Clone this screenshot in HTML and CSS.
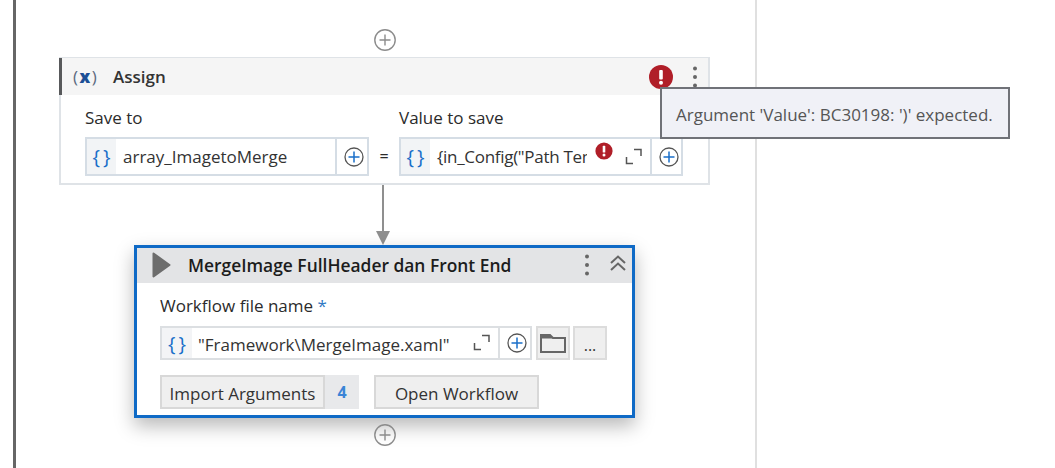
FILE: index.html
```html
<!DOCTYPE html>
<html lang="en">
<head>
<meta charset="utf-8">
<title>Workflow designer</title>
<link rel="stylesheet" href="styles.css">
</head>
<body>
<div class="page">
  <main class="canvas">
    <button class="add add-top" aria-label="Add activity"><svg width="24" height="24" viewBox="0 0 24 24"><circle cx="12" cy="12" r="10.200" fill="none" stroke="#8c8c8c" stroke-width="1.400"/><path d="M12 6.500v11M6.500 12h11" stroke="#8c8c8c" stroke-width="1.400"/></svg></button>

    <section class="assign">
      <header class="assign-head">
        <span class="var-icon">(<b>x</b>)</span>
        <span class="assign-title">Assign</span>
        <svg class="err-large" width="26" height="26" viewBox="0 0 26 26"><circle cx="13" cy="13" r="12" fill="#b01e28"/><rect x="11.200" y="6" width="3.600" height="9.500" rx="1" fill="#fff"/><circle cx="13" cy="18.800" r="2" fill="#fff"/></svg>
        <svg class="kebab" width="6" height="24" viewBox="0 0 6 24"><circle cx="3" cy="3.500" r="2" fill="#666"/><circle cx="3" cy="12" r="2" fill="#666"/><circle cx="3" cy="20.500" r="2" fill="#666"/></svg>
      </header>
      <div class="assign-body">
        <div class="assign-col">
          <label class="label">Save to</label>
          <div class="field">
            <span class="curly">{}</span>
            <span class="text">array_ImagetoMerge</span>
            <span class="plus-cell"><svg width="20" height="20" viewBox="0 0 20 20"><circle cx="10" cy="10" r="9" fill="none" stroke="#555" stroke-width="1.300"/><path d="M10 4.500v11M4.500 10h11" stroke="#1a6fc9" stroke-width="1.500"/></svg></span>
          </div>
        </div>
        <span class="equals">=</span>
        <div class="assign-col">
          <label class="label">Value to save</label>
          <div class="field">
            <span class="curly">{}</span>
            <span class="text text-clip">{in_Config("Path Temp")}</span>
            <svg class="err-small" width="18" height="18" viewBox="0 0 18 18"><circle cx="9" cy="9" r="8.600" fill="#b01e28"/><rect x="7.700" y="3.800" width="2.600" height="6.800" rx=".7" fill="#fff"/><circle cx="9" cy="13" r="1.500" fill="#fff"/></svg>
            <svg class="expand" width="18" height="18" viewBox="0 0 18 18"><path d="M9 1.500h7v6.500M1.500 9v6.500h6.500" fill="none" stroke="#555" stroke-width="1.500"/></svg>
            <span class="plus-cell"><svg width="20" height="20" viewBox="0 0 20 20"><circle cx="10" cy="10" r="9" fill="none" stroke="#555" stroke-width="1.300"/><path d="M10 4.500v11M4.500 10h11" stroke="#1a6fc9" stroke-width="1.500"/></svg></span>
          </div>
        </div>
      </div>
    </section>

    <svg class="connector" width="14" height="60" viewBox="0 0 14 60"><path d="M7 0v47" stroke="#8f8f8f" stroke-width="2"/><path d="M0 46h14l-7 14z" fill="#8f8f8f"/></svg>

    <section class="invoke">
      <header class="invoke-head">
        <svg class="play" width="20" height="26" viewBox="0 0 20 26"><path d="M2.500 1.500 18.500 13 2.500 24.500z" fill="#6d6d6d" stroke="#6d6d6d" stroke-width="2" stroke-linejoin="round"/></svg>
        <span class="invoke-title">MergeImage FullHeader dan Front End</span>
        <svg class="kebab-dark" width="6" height="24" viewBox="0 0 6 24"><circle cx="3" cy="3.500" r="2" fill="#666"/><circle cx="3" cy="12" r="2" fill="#666"/><circle cx="3" cy="20.500" r="2" fill="#666"/></svg>
        <svg class="chevrons" width="18" height="18" viewBox="0 0 18 18"><path d="M2 9 9 2.500 16 9M2 16l7-6.500 7 6.500" fill="none" stroke="#666" stroke-width="2"/></svg>
      </header>
      <div class="invoke-body">
        <label class="label">Workflow file name <span class="req">*</span></label>
        <div class="file-row">
          <div class="field field-file">
            <span class="curly curly-file">{}</span>
            <span class="text text-file">"Framework\MergeImage.xaml"</span>
            <svg class="expand" width="18" height="18" viewBox="0 0 18 18"><path d="M9 1.500h7v6.500M1.500 9v6.500h6.500" fill="none" stroke="#555" stroke-width="1.500"/></svg>
            <span class="plus-cell plus-file"><svg width="20" height="20" viewBox="0 0 20 20"><circle cx="10" cy="10" r="9" fill="none" stroke="#555" stroke-width="1.300"/><path d="M10 4.500v11M4.500 10h11" stroke="#1a6fc9" stroke-width="1.500"/></svg></span>
          </div>
          <button class="square folder"><svg width="26" height="19" viewBox="0 0 26 19"><path d="M1 18V1h9l3 3h12v14z" fill="none" stroke="#666" stroke-width="2"/><path d="M1 1h9l3 3.500H1z" fill="#666"/></svg></button>
          <button class="square dots">...</button>
        </div>
        <div class="action-row">
          <div class="import">
            <button class="btn btn-import">Import Arguments</button>
            <span class="count">4</span>
          </div>
          <button class="btn btn-open">Open Workflow</button>
        </div>
      </div>
    </section>

    <button class="add add-bottom" aria-label="Add activity"><svg width="24" height="24" viewBox="0 0 24 24"><circle cx="12" cy="12" r="10.200" fill="none" stroke="#8c8c8c" stroke-width="1.400"/><path d="M12 6.500v11M6.500 12h11" stroke="#8c8c8c" stroke-width="1.400"/></svg></button>
  </main>
  <div class="tooltip">Argument 'Value': BC30198: ')' expected.</div>
</div>
</body>
</html>
```
FILE: styles.css
```css
* { box-sizing: border-box; }
html, body { margin: 0; padding: 0; background: #fff; }
body { font-family: "Open Sans", "Noto Sans", "Liberation Sans", sans-serif; color: #2b2b2b; }
.page { position: relative; width: 1055px; height: 468px; overflow: hidden; background: #fff; }
.canvas {
  width: 744px; height: 468px; margin-left: 13px;
  border-left: 3px solid #666; border-right: 2px solid #e0e0e0;
  display: flex; flex-direction: column; align-items: flex-start;
  padding: 28px 0 0 1px;
}
.add { width: 24px; height: 24px; padding: 0; border: 0; background: none; display: block; flex: none; }
.add svg { display: block; }
.add-top { margin-left: 356px; margin-bottom: 5px; }
.add-bottom { margin-left: 356px; margin-top: 5px; }

.assign { width: 651px; height: 128px; margin-left: 42px; border: 2px solid #dfe3e7; flex: none; }
.assign-head {
  height: 37px; margin: -1px 0 0 -2px; background: #f5f5f5; border-left: 3px solid #58595b;
  display: flex; align-items: center; padding-left: 11px;
}
.var-icon { font-size: 17px; color: #5b6a80; width: 40px; letter-spacing: 1.500px; }
.var-icon b { color: #1c4f96; font-weight: 800; }
.assign-title { font-size: 17px; font-weight: 600; color: #333; flex: 1; }
.err-large { margin-right: 18px; position: relative; z-index: 1; }
.kebab { margin-right: 10px; }
.assign-body { display: flex; padding: 12px 0 0 24px; }
.assign-col { display: flex; flex-direction: column; }
.label { font-size: 17px; line-height: 22px; color: #2b2b2b; display: block; }
.assign-col .label { margin-bottom: 8px; }
.equals { width: 30px; text-align: center; font-size: 16px; align-self: flex-end; line-height: 39px; }
.field {
  width: 284px; height: 39px; border: 2px solid #d5dde5; display: flex; align-items: center;
  font-size: 17px; background: #fff;
}
.curly {
  width: 29px; height: 100%; background: #f2f4f6; color: #1a6fc9; font-size: 20px; letter-spacing: 3px; padding-left: 3px;
  display: flex; align-items: center; justify-content: center; flex: none;
}
.text { padding-left: 7px; flex: 1; white-space: nowrap; color: #333; font-size: 17px; min-width: 0; overflow: hidden; }
.text-clip { flex: none; width: 157px; letter-spacing: -.3px; }
.text-file { padding-left: 6px; padding-top: 2px; }
.err-small { position: relative; top: -6px; margin-left: 8px; margin-right: 12px; flex: none; }
.expand { flex: none; margin-right: 7px; }
.plus-cell {
  width: 32px; height: 100%; border-left: 2px solid #d5dde5; padding-left: 3px;
  display: flex; align-items: center; justify-content: center; flex: none; margin-left: auto;
}
.connector { margin-left: 359px; display: block; flex: none; }

.invoke {
  width: 501px; height: 173px; margin-left: 117px; border: 3px solid #0f6ac6; background: #fff; flex: none;
  box-shadow: 0 8px 18px rgba(0,0,0,.28);
}
.invoke-head { height: 35px; background: #e3e4e6; display: flex; align-items: center; padding: 0 0 1px 14px; }
.play { flex: none; }
.invoke-title { font-size: 17.400px; font-weight: 600; color: #1c1c1c; margin-left: 17px; flex: 1; white-space: nowrap; }
.kebab-dark { margin-right: 19px; }
.chevrons { margin: 0 5px 4px 0; }
.invoke-body { padding: 12px 0 0 23px; }
.req { color: #2f78c4; }
.file-row { display: flex; margin-top: 9px; }
.field-file { width: 372px; height: 34px; border: 2px solid #dcdfe2; }
.curly-file { width: 30px; background: #f3f4f6; }
.plus-file { width: 32px; border-left-color: #dcdfe2; }
.square {
  width: 34px; height: 34px; padding: 0; background: #efefef; border: 2px solid #dcdcdc;
  display: flex; align-items: center; justify-content: center; font: inherit; color: #333;
}
.square svg { display: block; }
.folder { margin-left: 4px; }
.dots { margin-left: 3px; font-size: 16px; line-height: 1; padding-top: 4px; }
.action-row { display: flex; margin-top: 15px; }
.import { display: flex; background: #e8e9eb; width: 199px; }
.btn {
  height: 34px; padding: 2px 0 0; background: #efefef; border: 2px solid #d8d8d8; font: inherit; font-size: 17px; color: #333;
  white-space: nowrap;
}
.btn-import { width: 165px; }
.count { flex: 1; text-align: center; line-height: 34px; color: #3a84d6; font-weight: 700; font-size: 16px; }
.btn-open { width: 165px; margin-left: 15px; }

.tooltip {
  position: absolute; left: 660px; top: 87px; width: 350px; height: 52px;
  border: 2px solid #707278; background: #f0f1f7; color: #555;
  font-size: 17px; line-height: 52px; padding-left: 14px; white-space: nowrap; z-index: 5;
}
```
